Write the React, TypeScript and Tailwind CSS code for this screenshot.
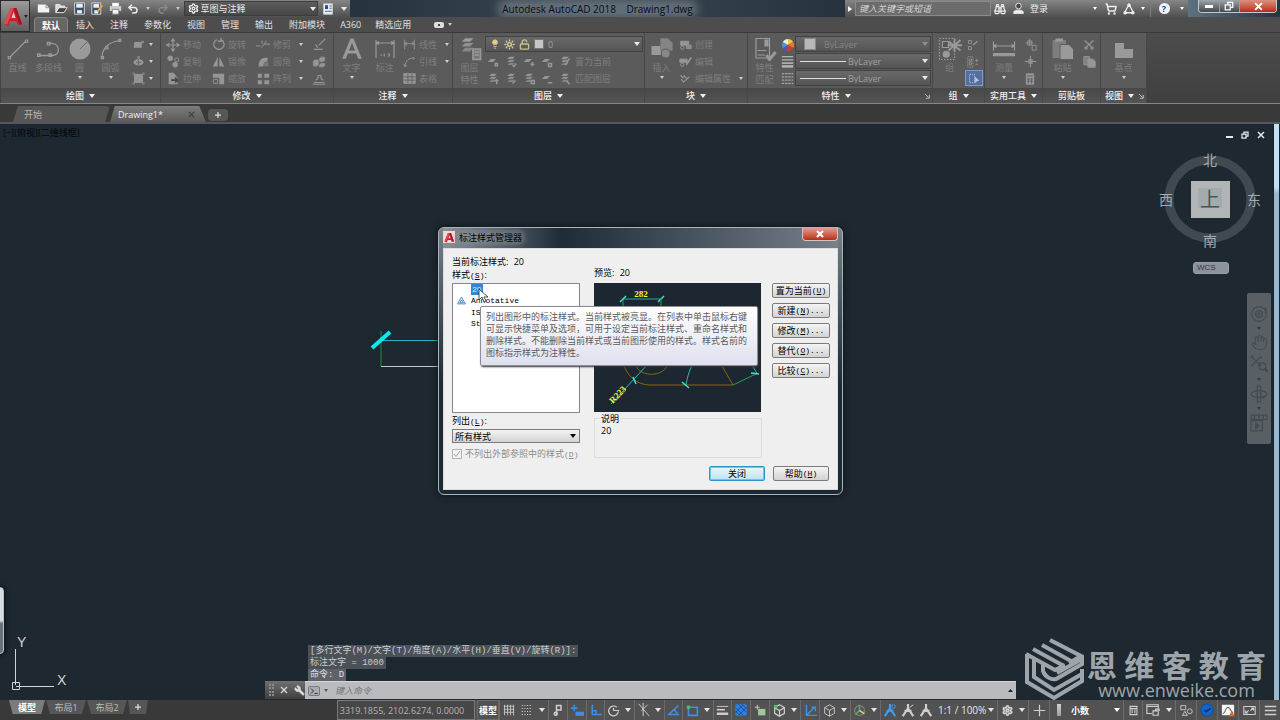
import type { ReactNode } from 'react';
import { Settings, ShoppingCart, Wrench, Hand, Undo2, Redo2, Binoculars, Sun, Lightbulb, LockOpen } from 'lucide-react';

type Kids = { children?: ReactNode };

function Ico({ size = 16, sw = 1.1, className = '', children }: Kids & { size?: number; sw?: number; className?: string }) {
  return (
    <svg width={size} height={size} viewBox="0 0 16 16" fill="none" stroke="currentColor" strokeWidth={sw} className={`shrink-0 ${className}`} aria-hidden="true">
      {children}
    </svg>
  );
}

function Down({ className = '' }: { className?: string }) {
  return (
    <svg width="6" height="4" viewBox="0 0 6 4" className={`shrink-0 ${className}`} aria-hidden="true">
      <path d="M0 0h6L3 4z" fill="currentColor" />
    </svg>
  );
}

function Tiny({ className = 'text-[#c9c9c9]' }: { className?: string }) {
  return (
    <svg width="4" height="3" viewBox="0 0 4 3" className={`shrink-0 ${className}`} aria-hidden="true">
      <path d="M0 0h4L2 3z" fill="currentColor" />
    </svg>
  );
}

/* ---------- shared glyphs ---------- */

const layers = (
  <g fill="currentColor" stroke="none">
    <path d="M6 1h7l-3 3H3z" />
    <path d="M6 5h7l-3 3H3z" opacity=".85" />
    <path d="M6 9h7l-3 3H3z" opacity=".7" />
  </g>
);

function LogoA({ size }: { size: number }) {
  return (
    <svg width={size} height={size} viewBox="0 0 22 22" className="shrink-0" aria-hidden="true">
      <path d="M1 19 8 2h6l6 17-4.500 1-1.500-4H7.500L5.500 21z" fill="#c8202c" />
      <path d="M8 2h3L7 13l-2.500 6L1 19z" fill="#e84848" />
      <path d="m11 6 2.200 6.500H8.800z" fill="#d9cccc" />
      <path d="M14 2l6 17-2.500.600L11.500 2z" fill="#8e1019" opacity=".7" />
    </svg>
  );
}

/* ---------- title bar ---------- */

function QuickButton({ label, children, wide }: Kids & { label: string; wide?: boolean }) {
  return (
    <button aria-label={label} className={`flex h-full items-center justify-center ${wide ? 'w-3' : 'w-[18px]'}`}>
      {children}
    </button>
  );
}

function TitleBar() {
  return (
    <div className="flex h-[17px] items-stretch bg-[#202b36] text-[#ececec]">
      <div className="flex w-[320px] shrink-0 items-stretch bg-linear-to-b from-[#858585] to-[#505050] pl-[5px]">
        <QuickButton label="新建">
          <Ico size={13}><path d="M1 3h10l4 4v6H1z" fill="#f2f2f2" stroke="none" /><path d="M11 3v4h4" stroke="#888" /></Ico>
        </QuickButton>
        <QuickButton label="打开">
          <Ico size={13}><path d="M1 13V3h5l1 2h5v2" fill="#d9d9d9" /><path d="M1 13l4-6h10l-4 6z" fill="#444" stroke="#eee" /></Ico>
        </QuickButton>
        <QuickButton label="保存">
          <Ico size={13}><path d="M2 1h12v14H2z" fill="#35506b" stroke="#ddd" /><path d="M4 2h8v5H4z" fill="#eee" stroke="none" /><path d="M5 10h6v4H5z" fill="#eee" stroke="none" /></Ico>
        </QuickButton>
        <QuickButton label="另存为">
          <Ico size={13}><path d="M1 1h11v14H1z" fill="#35506b" stroke="#ddd" /><path d="M3 2h7v5H3zM4 10h5v4H4z" fill="#eee" stroke="none" /><path d="M8 12l6-8" stroke="#e5a93c" strokeWidth="2.500" /></Ico>
        </QuickButton>
        <QuickButton label="打印">
          <Ico size={13}><path d="M4 1h8v4H4z" fill="#fff" stroke="none" /><path d="M1 5h14v6H1z" fill="#cfcfcf" stroke="none" /><path d="M4 9h8v6H4z" fill="#f4f4f4" stroke="#777" /></Ico>
        </QuickButton>
        <QuickButton label="放弃"><Undo2 size={12} strokeWidth={3} /></QuickButton>
        <QuickButton label="放弃列表" wide><Tiny /></QuickButton>
        <QuickButton label="重做"><Redo2 size={12} strokeWidth={2.5} className="text-[#8b8b8b]" /></QuickButton>
        <QuickButton label="重做列表" wide><Tiny /></QuickButton>
        <div className="relative my-px flex w-[136px] items-center border border-[#3c3c3c] bg-linear-to-b from-[#5b5b5b] to-[#474747]">
          <Settings size={11} strokeWidth={3} className="pointer-events-none absolute left-[3px]" />
          <select aria-label="工作空间" className="h-full w-full appearance-none bg-transparent pl-4 text-[9px] leading-none outline-none">
            <option>草图与注释</option>
          </select>
          <Down className="pointer-events-none absolute right-px" />
        </div>
        <button aria-label="界面" className="flex w-5 items-center justify-center">
          <Ico size={12}><path d="M2 1h12v14H2z" fill="#e8eef5" stroke="#ccc" /><path d="M4 3h4v5H4z" fill="#2d4c80" stroke="none" /><path d="M10 4h3M10 7h3M4 11h9" stroke="#2d4c80" /></Ico>
        </button>
        <button aria-label="自定义" className="flex w-3 items-center justify-center"><Down /></button>
      </div>
      <div className="flex min-w-0 flex-1 items-center justify-center overflow-hidden bg-linear-to-r from-[#26333e] via-[#3b4854] to-[#26333e]">
        <span className="whitespace-pre rounded-full bg-[#7c8790]/60 text-[10px] leading-[10px] text-[#0b0d0f] shadow-[0_0_8px_5px_rgba(124,135,144,0.6)]">Autodesk AutoCAD 2018    Drawing1.dwg</span>
      </div>
      <div className="flex shrink-0 items-stretch bg-linear-to-b from-[#858585] to-[#505050]">
        <button aria-label="展开" className="flex w-[10px] items-center justify-center">
          <svg width="4" height="6" viewBox="0 0 4 6" aria-hidden="true"><path d="M0 0v6l4-3z" fill="#fff" /></svg>
        </button>
        <input aria-label="搜索" placeholder="键入关键字或短语" className="my-px w-[136px] border border-[#8a8a8a] bg-[#6c6c6c] px-[3px] text-[9px] leading-none italic text-white outline-none placeholder:text-[#d2d2d2]" />
        <button aria-label="查找" className="flex w-[18px] items-center justify-center"><Binoculars size={12} strokeWidth={2.5} /></button>
        <button className="flex w-[80px] items-center gap-[5px] pl-[3px] text-[9px] leading-none">
          <Ico size={13}><circle cx="8" cy="5" r="3.500" fill="#474747" stroke="#eee" /><path d="M2 14c0-4 3-4 6-4s6 0 6 4z" fill="#eee" /></Ico>
          登录
        </button>
        <button aria-label="登录选项" className="flex w-3 items-center justify-center"><Tiny className="text-white" /></button>
        <button aria-label="应用商店" className="flex w-5 items-center justify-center"><ShoppingCart size={12} strokeWidth={3} /></button>
        <button aria-label="A360" className="flex w-4 items-center justify-center">
          <Ico size={12} sw={1.800}><path d="M8 2 2 13h12z" /><circle cx="8" cy="3" r="1.500" fill="#fff" /><circle cx="3" cy="13" r="1.500" fill="#fff" /><circle cx="13" cy="13" r="1.500" fill="#fff" /></Ico>
        </button>
        <button aria-label="A360 选项" className="flex w-3 items-center justify-center"><Tiny className="text-white" /></button>
        <span className="mx-px w-px bg-[#7c7c7c]" />
        <button aria-label="帮助" className="flex w-6 items-center justify-center">
          <span className="flex size-[11px] items-center justify-center rounded-full bg-[#f0f4fa] text-[9px] leading-none font-bold text-[#1c3f8c]">?</span>
        </button>
        <button aria-label="帮助选项" className="flex w-3 items-center justify-center"><Tiny className="text-white" /></button>
      </div>
      <div className="flex w-[92px] shrink-0 items-start bg-linear-to-r from-[#5d7280] to-[#28343f] pr-[3px] pl-[10px]">
        <div className="flex h-[13px] w-full overflow-hidden rounded-b border border-t-0 border-[#c3c8cc]">
          <button aria-label="最小化" className="flex flex-1 items-center justify-center border-r border-[#989da1] bg-linear-to-b from-[#a0a5a9] to-[#42494f]"><span className="h-[3px] w-2 bg-white" /></button>
          <button aria-label="还原" className="flex flex-1 items-center justify-center border-r border-[#989da1] bg-linear-to-b from-[#a0a5a9] to-[#42494f]"><Ico size={10} sw={2}><path d="M2 6h8v8H2z" stroke="#fff" /><path d="M6 5V2h8v8h-3" stroke="#fff" /></Ico></button>
          <button aria-label="关闭窗口" className="flex w-9 items-center justify-center bg-linear-to-b from-[#dc9080] to-[#b8270d]"><Ico size={9} sw={3.500}><path d="M2 2l12 12M14 2 2 14" stroke="#fff" /></Ico></button>
        </div>
      </div>
    </div>
  );
}

const ribbonTabs = ['默认', '插入', '注释', '参数化', '视图', '管理', '输出', '附加模块', 'A360', '精选应用'];

function RibbonTabs() {
  return (
    <div className="flex h-[15px] items-stretch bg-[#4d4d4d] pl-1 text-[9px] leading-none text-[#e0e0e0]" role="tablist">
      {ribbonTabs.map((t, i) => (
        <button key={t} role="tab" aria-selected={i === 0} className={i === 0 ? 'rounded-t-sm border border-b-0 border-[#868686] bg-[#666] px-[7px] font-bold text-white' : i > 7 ? 'px-[7px]' : 'px-2'}>
          {t}
        </button>
      ))}
      <button aria-label="功能区显示" className="flex items-center gap-1 pl-4">
        <span className="flex h-[6px] w-[10px] items-center justify-center rounded-xs bg-[#dedede]"><span className="size-[2px] bg-[#444]" /></span>
        <Tiny />
      </button>
    </div>
  );
}

/* ---------- ribbon ---------- */

function Big({ label, icon, arrow, w = 'w-[31px]' }: { label: string[]; icon: ReactNode; arrow?: boolean; w?: string }) {
  return (
    <button className={`flex shrink-0 flex-col items-center text-[9px] text-[#7e7e7e] ${w}`}>
      <span className="flex h-[26px] items-center text-[#9a9a9a]">{icon}</span>
      {label.map((l) => <span key={l} className="leading-[12px] whitespace-nowrap">{l}</span>)}
      {arrow && <Tiny className="mt-[2px] text-[#d0d0d0]" />}
    </button>
  );
}

function Small({ label, icon, arrow }: { label?: string; icon: ReactNode; arrow?: boolean }) {
  return (
    <button className="flex h-[17px] items-center gap-[2px] text-[9px] leading-none whitespace-nowrap text-[#7e7e7e]">
      <span className="flex w-4 justify-center text-[#969696]">{icon}</span>
      {label}
      {arrow && <Tiny className={label ? 'ml-[6px] text-[#d0d0d0]' : 'ml-px text-[#d0d0d0]'} />}
    </button>
  );
}

function Panel({ title, w, children, arrow = true, corner }: Kids & { title: string; w: string; arrow?: boolean; corner?: boolean }) {
  return (
    <section className={`flex shrink-0 flex-col border-r border-[#474747] bg-[#5b5b5b] ${w}`}>
      <div className="flex flex-1 items-start px-px pt-[3px]">{children}</div>
      <button className={`relative flex h-[15px] w-full items-center justify-center gap-[5px] bg-linear-to-b from-[#484848] to-[#545454] text-[9px] leading-none font-medium text-[#f0f0f0] ${corner ? 'pr-2' : ''}`}>
        {title}
        {arrow && <Down />}
        {corner && <Ico size={6} sw={2} className="absolute right-[2px]"><path d="M3 3l9 9M14 5v9H5" stroke="#ddd" /></Ico>}
      </button>
    </section>
  );
}

function Combo({ label, value, lead, pad, dim }: { label: string; value: string; lead: ReactNode; pad: string; dim?: boolean }) {
  return (
    <div className="relative flex h-4 w-full items-center border border-[#424242] bg-linear-to-b from-[#696969] to-[#555]">
      <span className="pointer-events-none absolute inset-y-0 left-1 flex items-center gap-1">{lead}</span>
      <select aria-label={label} className={`h-full w-full appearance-none bg-transparent text-[9px] leading-none outline-none ${pad} ${dim ? 'text-[#858585]' : 'text-[#a0a0a0]'}`}>
        <option>{value}</option>
      </select>
      <Down className={`pointer-events-none absolute right-[2px] ${dim ? 'text-[#8f8f8f]' : 'text-[#e8e8e8]'}`} />
    </div>
  );
}

const g = {
  line: <Ico size={24} sw={0.8}><path d="M3 13 13 3" /><path d="M1.500 13h1.500v1.500H1.500zM13 2h1.500v1.500H13z" /></Ico>,
  pline: <Ico size={26} sw={0.8}><path d="M2 12h8c5 0 5-7 0-7.500H8" /><path d="M1 11h1.500v1.500H1zM7 4h1.500v1.500H7zM8 11h1.500v1.500H8z" /></Ico>,
  circle: <Ico size={24}><circle cx="8" cy="8" r="7" fill="currentColor" stroke="none" /><path d="m8 8 5-5" stroke="#6a6a6a" strokeWidth=".6" /></Ico>,
  arc: <Ico size={24} sw={0.8}><path d="M2 14C2 8 6 3 14 2.500" /><path d="M1.500 13h1.500v1.500H1.500zM4.500 6.500H6V8H4.500zM13 1.500h1.500V3H13z" /></Ico>,
  text: <Ico size={24}><path d="M1.500 14.500 7 1h2l5.500 13.500h-2.300L10.800 11H5.200l-1.400 3.500zM6 9h4L8 4z" fill="currentColor" stroke="none" /></Ico>,
  dim: <Ico size={24} sw={0.8}><path d="M2 2v12M14 2v12M2 4h12M2 4l2-1M2 4l2 1M14 4l-2-1M14 4l-2 1" /><path d="M5 12h1M7.500 11v2M10 11l1 1-1 1" /></Ico>,
  layerProps: <Ico size={24}><g transform="scale(.8)">{layers}</g><path d="M10 8h5v7h-5z" fill="#777" /><path d="M11 10h3M11 12h3" /></Ico>,
  insert: <Ico size={24}><path d="M1 6h9v6H1z" fill="currentColor" stroke="none" /><path d="M7 1h5l3 3v5H7z" fill="#858585" stroke="#777" strokeWidth=".5" /><circle cx="10.500" cy="11" r="3" fill="#888" stroke="#5b5b5b" strokeWidth=".7" /></Ico>,
  match: <Ico size={24} sw={0.8}><path d="M2 1h9v13H2z" /><path d="M8 2h2v4H8z" fill="currentColor" /><path d="M3 9h6M3 12h5" /><path d="m9 12 2 3 4-5" strokeWidth="2" /></Ico>,
  group: <Ico size={24} sw={0.8}><path d="M1 1h10v14H1z" strokeDasharray="1 1" /><path d="M3 3h4v4H3z" fill="#555" /><circle cx="5.500" cy="11.500" r="2" fill="currentColor" /><path d="M11 1v9M7 3l8 6M15 2 7 9M6.500 5.500H16" strokeWidth="1.200" /></Ico>,
  measure: <Ico size={24} sw={0.8}><path d="M1 3v6M15 3v6M1 6h14M1 6l2-1M1 6l2 1M15 6l-2-1M15 6l-2 1" /><path d="M1 11h14v1.500H1z" fill="currentColor" /></Ico>,
  paste: <Ico size={24}><path d="M1 2h9v12H1z" fill="#7d7d7d" stroke="none" /><path d="M3 1h5v2H3z" fill="currentColor" stroke="none" /><path d="M6 5h6l3 3v7H6z" fill="currentColor" stroke="#5b5b5b" strokeWidth=".6" /></Ico>,
  base: <Ico size={24}><path d="M2 4h6v4h6v6H2z" fill="currentColor" stroke="none" /></Ico>,
  rect: <Ico size={13}><path d="M3 5h9v7H2z" fill="currentColor" stroke="none" /><path d="M12 4h2v2h-2z" /></Ico>,
  ellipse: <Ico size={13}><ellipse cx="8" cy="9" rx="6" ry="4" fill="currentColor" stroke="none" /><path d="M8 3v9M5 9h6" stroke="#666" /><path d="M7 2h2v2H7z" /></Ico>,
  hatch: <Ico size={13}><path d="M3 3h10v10H3z" fill="currentColor" /><path d="M1 1h2v2H1zM13 1h2v2h-2zM1 13h2v2H1zM13 13h2v2h-2zM5 11l6-6" stroke="#888" /></Ico>,
  move: <Ico size={14} sw={1.400}><path d="M8 2v12M2 8h12M6 4l2-3 2 3M6 12l2 3 2-3M4 6 1 8l3 2M12 6l3 2-3 2" /></Ico>,
  rotate: <Ico size={13} sw={1.600}><path d="M6 2a6.300 6.300 0 1 0 5 0M11 0v4H7" /></Ico>,
  trim: <Ico size={14}><path d="M0 9h5M10 6l-4 5M12 3l-2 3M9 7h7M7 3v4" /></Ico>,
  erase: <Ico size={13} sw={1.500}><path d="M15 1 7 9M3 8l3 4M1 14h11" /></Ico>,
  copy: <Ico size={13}><circle cx="4" cy="4" r="3" fill="currentColor" /><circle cx="12" cy="6" r="2.500" /><circle cx="10" cy="12" r="3" fill="currentColor" /></Ico>,
  mirror: <Ico size={13}><path d="M7 2v12H1zM9 2v12h6z" fill="currentColor" stroke="none" /></Ico>,
  fillet: <Ico size={13}><path d="M2 14C2 7 5 3 13 3v5c-4 0-5 2-5 6z" fill="currentColor" stroke="none" /><path d="M9 9h5v5H9z" fill="#7a7a7a" stroke="none" /></Ico>,
  explode: <Ico size={14}><path d="M1 7l2-2h5v6l-2 2H1zM8 4l2-2h5v4l-2 2H8zM8 11l2-2h5v3l-2 2H8z" fill="currentColor" stroke="#666" strokeWidth=".6" /></Ico>,
  stretch: <Ico size={13}><path d="M2 1h6l5 6v8H2z" fill="currentColor" stroke="none" /><path d="M5 10h8M10 7l3 3-3 3" stroke="#454545" strokeWidth="2" /></Ico>,
  scale: <Ico size={13}><path d="M1 2h14v13H9V7H1z" fill="currentColor" stroke="none" /><path d="M2 9h5v5H2z" /></Ico>,
  array: <Ico size={13}><path d="M1 2h5v5H1zM9 2h6v5H9zM1 10h5v5H1zM9 10h6v5H9z" fill="currentColor" stroke="none" /></Ico>,
  offset: <Ico size={14} sw={1.300}><path d="M2 12h12M4 9c2 0 3-2 3-5h3c0 3 1 5 3 5M1 14h14" /></Ico>,
  linear: <Ico size={13}><path d="M2 2v12M14 2v12M2 7h12M5 5 2 7l3 2M11 5l3 2-3 2" /></Ico>,
  leader: <Ico size={13}><path d="M2 14C4 6 7 4 12 4M1 11l1 3 3-1" /><circle cx="13" cy="4" r="1" /></Ico>,
  table: <Ico size={13}><path d="M1 2h14v12H1z" fill="currentColor" /><path d="M1 6h14M1 10h14M6 2v12M11 2v12" stroke="#606060" /></Ico>,
  block: <Ico size={13}><path d="M2 4h10v5H2z" fill="currentColor" /><circle cx="4" cy="12" r="2" /><path d="M9 9h6v4H9z" fill="#888" /></Ico>,
  blockEdit: <Ico size={13}><path d="M1 5h9v4H1z" fill="currentColor" /><circle cx="4" cy="12" r="2" /><path d="m9 12 6-9" strokeWidth="2" /></Ico>,
  attr: <Ico size={12} sw={1.500}><path d="m2 3 4 4M6 3l4 4M3 8l3 4 8-7" /></Ico>,
  lay: (extra: string) => <Ico size={12}>{layers}<path d={extra} strokeWidth="2" /></Ico>,
  flat: (extra: string) => <Ico size={12}><path d="M5 4h7l-4 4H1z" fill="currentColor" stroke="none" /><path d={extra} strokeWidth="2" /></Ico>,
};

function Ribbon() {
  return (
    <div className="flex h-[72px] items-stretch border-t border-b border-[#3a3a3a] border-b-[#868686] bg-linear-to-b from-[#4c4c4c] to-[#404040] pl-px">
      <Panel title="绘图" w="w-[160px]">
        <Big label={['直线']} icon={g.line} />
        <Big label={['多段线']} icon={g.pline} />
        <Big label={['圆']} icon={g.circle} arrow />
        <Big label={['圆弧']} icon={g.arc} arrow />
        <div className="pl-1">
          <Small icon={g.rect} arrow />
          <Small icon={g.ellipse} arrow />
          <Small icon={g.hatch} arrow />
        </div>
      </Panel>
      <Panel title="修改" w="w-[173px]">
        <div className="grid grid-cols-[45px_45px_56px_17px] pl-[3px]">
          <Small label="移动" icon={g.move} /><Small label="旋转" icon={g.rotate} /><Small label="修剪" icon={g.trim} arrow /><Small icon={g.erase} />
          <Small label="复制" icon={g.copy} /><Small label="镜像" icon={g.mirror} /><Small label="圆角" icon={g.fillet} arrow /><Small icon={g.explode} />
          <Small label="拉伸" icon={g.stretch} /><Small label="缩放" icon={g.scale} /><Small label="阵列" icon={g.array} arrow /><Small icon={g.offset} />
        </div>
      </Panel>
      <Panel title="注释" w="w-[119px]">
        <Big label={['文字']} icon={g.text} arrow w="w-[33px]" />
        <Big label={['标注']} icon={g.dim} w="w-[33px]" />
        <div>
          <Small label="线性" icon={g.linear} arrow />
          <Small label="引线" icon={g.leader} arrow />
          <Small label="表格" icon={g.table} />
        </div>
      </Panel>
      <Panel title="图层" w="w-[192px]">
        <Big label={['图层', '特性']} icon={g.layerProps} />
        <div className="flex-1">
          <Combo
            label="图层"
            value="0"
            pad="pl-[62px]"
            lead={
              <>
                <Lightbulb size={10} className="fill-[#e3d08c] text-[#d8c68a]" />
                <Sun size={11} strokeWidth={3} className="text-[#d9cd97]" />
                <LockOpen size={11} strokeWidth={3} className="text-[#cdbd86]" />
                <span className="size-[10px] border border-[#777] bg-[#c6c6c6]" />
              </>
            }
          />
          <div className="grid grid-cols-[18px_18px_18px_18px_1fr] pt-px">
            <Small icon={g.flat('M11 10h3v3h-3z')} /><Small icon={g.lay('m10 12 2 2 3-4')} /><Small icon={g.flat('M10 11h5M12.500 8v6')} /><Small icon={g.flat('M10 10h4v4h-4z')} /><Small label="置为当前" icon={g.lay('m9 12 5-9')} />
            <Small icon={g.lay('M13 9v6M11 11l2-2 2 2')} /><Small icon={g.lay('m10 14 4-4')} /><Small icon={g.lay('M11 10h4v4h-4z')} /><Small icon={g.flat('M9 13h6')} /><Small label="匹配图层" icon={g.lay('m10 10 4 5')} />
          </div>
        </div>
      </Panel>
      <Panel title="块" w="w-[103px]">
        <Big label={['插入']} icon={g.insert} arrow />
        <div>
          <Small label="创建" icon={g.block} />
          <Small label="编辑" icon={g.blockEdit} />
          <Small label="编辑属性" icon={g.attr} arrow />
        </div>
      </Panel>
      <Panel title="特性" w="w-[185px]" corner>
        <Big label={['特性', '匹配']} icon={g.match} />
        <div className="flex w-[15px] flex-col items-center">
          <span className="flex h-[17px] items-center">
            <svg width="12" height="12" viewBox="0 0 12 12" aria-hidden="true">
              <path d="M6 6V0a6 6 0 0 1 5.200 3z" fill="#f0c63c" /><path d="M6 6l5.200-3a6 6 0 0 1 0 6z" fill="#df7a2e" /><path d="M6 6l5.200 3A6 6 0 0 1 6 12z" fill="#d23b34" />
              <path d="M6 6v6A6 6 0 0 1 .8 9z" fill="#5a54c0" /><path d="M6 6 .8 9a6 6 0 0 1 0-6z" fill="#3f9bd8" /><path d="M6 6 .8 3A6 6 0 0 1 6 0z" fill="#e8f0e0" />
            </svg>
          </span>
          <Ico size={13} className="my-[2px] text-[#b4b4b4]"><path d="M1 2h14M1 6h14" strokeWidth="1.500" /><path d="M1 10h14" strokeWidth="2" /><path d="M1 14h14" strokeWidth="3" /></Ico>
          <Ico size={13} className="my-[2px] text-[#a4a4a4]"><path d="M1 2h14M1 6h14M1 10h14M1 14h14" strokeDasharray="3 1" strokeWidth="1.500" /></Ico>
        </div>
        <div className="flex min-w-0 flex-1 flex-col gap-px">
          <Combo label="颜色" value="ByLayer" pad="pl-[28px]" dim lead={<span className="ml-1 size-3 border border-[#888] bg-[#b8b8b8]" />} />
          <Combo label="线宽" value="ByLayer" pad="pl-[52px]" lead={<span className="h-px w-[46px] bg-[#e0e0e0]" />} />
          <Combo label="线型" value="ByLayer" pad="pl-[52px]" lead={<span className="h-px w-[46px] bg-[#e0e0e0]" />} />
        </div>
      </Panel>
      <Panel title="组" w="w-[52px]">
        <Big label={['组']} icon={g.group} />
        <div>
          <Small icon={<Ico size={12}><path d="M2 2h4v4H2zM2 10h4v4H2z" /><path d="m8 8 6-5" strokeWidth="2" /></Ico>} />
          <Small icon={<Ico size={12}><path d="M1 1h7v14H1z" strokeDasharray="2 1" /><path d="M3 4h3v3H3zM3 9h3v3H3zM11 6h4M13 4v4M11 11h4" /></Ico>} />
          <button aria-label="组选择" className="flex h-4 w-[18px] items-center justify-center border border-[#7f9ac6] bg-[#53709f] text-[#b9c8e0]">
            <Ico size={11}><path d="M1 2h7v12H1z" strokeDasharray="2 1" /><path d="m9 6 5 5-3 .5L9 14z" fill="currentColor" /></Ico>
          </button>
        </div>
      </Panel>
      <Panel title="实用工具" w="w-[58px]">
        <Big label={['测量']} icon={g.measure} arrow w="w-[36px]" />
        <div>
          <Small icon={<Ico size={13}><path d="M7 1v9M2 6h9M4.500 3.500h5v5h-5zM10 9h5v6h-5z" /></Ico>} />
          <Small icon={<Ico size={13} sw={1.300}><path d="M8 1v14M1 8h14M6 6h4v4H6z" /></Ico>} />
          <Small icon={<Ico size={12}><path d="M3 1h10v14H3z" fill="currentColor" /><path d="M4 4h8M4 8h8M4 11h8M6 7v7M10 7v7" stroke="#5d5d5d" /></Ico>} />
        </div>
      </Panel>
      <Panel title="剪贴板" w="w-[58px]" arrow={false}>
        <Big label={['粘贴']} icon={g.paste} arrow w="w-[37px]" />
        <div>
          <Small icon={<Ico size={12} sw={1.600}><path d="m2 2 9 8M14 2 5 10" /><circle cx="4" cy="12" r="1.500" /><circle cx="12" cy="12" r="1.500" /></Ico>} />
          <Small icon={<Ico size={13}><path d="M1 2h7v10H1z" fill="#808080" /><path d="M6 5h6l3 3v7H6z" fill="currentColor" /></Ico>} />
        </div>
      </Panel>
      <Panel title="视图" w="w-[46px]" corner>
        <Big label={['基点']} icon={g.base} arrow w="w-full" />
      </Panel>
    </div>
  );
}

/* ---------- file tabs ---------- */

function FileTabs() {
  return (
    <div className="flex h-5 items-end border-b-2 border-[#56565e] bg-[#393939] pl-[13px] text-[9px] leading-none">
      <button className="flex h-4 w-[97px] items-center rounded-t-sm bg-[#565656] pl-[11px] text-[#b7b7b7] [clip-path:polygon(5%_0,100%_0,95%_100%,0_100%)]">开始</button>
      <div className="flex h-4 w-[96px] items-center justify-between rounded-t-sm bg-linear-to-b from-[#7c7c7c] to-[#5b5b5b] pr-[11px] pl-2 text-[#f1f1f1] [clip-path:polygon(5%_0,93%_0,100%_100%,0_100%)]">
        <button className="font-medium">Drawing1*</button>
        <button aria-label="关闭图形"><Ico size={7} sw={3}><path d="m2 2 12 12M14 2 2 14" stroke="#3f3f3f" /></Ico></button>
      </div>
      <button aria-label="新图形" className="mb-px ml-[2px] flex h-3 w-5 items-center justify-center rounded-sm bg-[#575757]"><Ico size={8} sw={2.500}><path d="M8 2v12M2 8h12" stroke="#ddd" /></Ico></button>
    </div>
  );
}

/* ---------- dialog ---------- */

function DlgButton({ children, w, primary }: Kids & { w: string; primary?: boolean }) {
  return (
    <button className={`flex h-[15px] items-center justify-center rounded-[2px] border text-[9px] leading-none whitespace-pre text-black ${w} ${primary ? 'border-[#2f95c4] bg-linear-to-b from-[#eaf6fb] to-[#bfe3f3] ring-1 ring-[#6fc7e8] ring-inset' : 'border-[#7b7b7b] bg-linear-to-b from-[#f4f4f4] to-[#d3d3d3]'}`}>
      {children}
    </button>
  );
}

function Key({ k, more = '' }: { k: string; more?: string }) {
  return <span className="font-['Liberation_Mono',monospace] text-[8px]">(<u>{k}</u>){more}</span>;
}

function Preview() {
  return (
    <svg width="167" height="129" viewBox="0 0 167 129" fill="none" className="block bg-[#1d2731]" role="img" aria-label="预览">
      <path d="M29 16h38" stroke="#28a9a8" />
      <path d="M26 19l6-6M64 19l6-6" stroke="#3fe0c0" strokeWidth="1.500" />
      <path d="M29 17v14M67 15v14" stroke="#2b9e35" />
      <text x="47" y="14" textAnchor="middle" fill="#f4f436" fontSize="9" fontWeight="bold" fontFamily="Liberation Serif">282</text>
      <path d="M29 80c4 13 14 22 27 22h83L128 83" stroke="#8b6413" />
      <path d="M42 83c5 11 26 11 31 0" stroke="#8b6413" />
      <path d="M139 102l25-12" stroke="#1fa63c" />
      <path d="M53 82 17 121M98 82c-3 7-5 13-6 20M158 82c2 4 4 6 5 9" stroke="#27b9b9" />
      <path d="M39 94l3 7M88 99l7 6M157 90l8 1" stroke="#3fe0d8" strokeWidth="1.500" />
      <text transform="translate(19 121) rotate(-47)" fill="#f4f436" fontSize="9" fontWeight="bold" fontFamily="Liberation Serif">R223</text>
    </svg>
  );
}

function Dialog() {
  return (
    <div role="dialog" aria-label="标注样式管理器" className="absolute top-[103px] left-[438px] w-[405px] rounded-md border border-[#a9b4bb] bg-linear-to-b from-[#77828a] to-[#1d2933] to-60% p-1 pt-0 shadow-[0_0_6px_#0b1116]">
      <header className="flex h-5 items-start justify-between bg-linear-to-r from-[#8a9298] via-[#1f2c38] via-30% to-[#77818a]">
        <h1 className="flex h-[18px] items-center gap-1 text-[9px] leading-none text-black">
          <span className="flex size-3 items-center justify-center bg-[#ecd9d9]"><LogoA size={11} /></span>
          <span className="rounded bg-[#8b949b]/50 shadow-[0_0_4px_3px_rgba(139,148,155,0.5)]">标注样式管理器</span>
        </h1>
        <button aria-label="关闭对话框" className="flex h-[13px] w-9 items-center justify-center rounded-b border border-t-0 border-[#d9c3bf] bg-linear-to-b from-[#e09c8c] to-[#b52c14]"><Ico size={8} sw={4}><path d="m2 2 12 12M14 2 2 14" stroke="#fff" /></Ico></button>
      </header>
      <div className="border border-[#d9dde0] bg-[#efefef] px-2 pt-[6px] pb-2 text-[9px] leading-[13px] text-black">
        <p>当前标注样式: <span className="ml-[3px]">20</span></p>
        <div className="flex items-start">
          <div className="w-[128px] shrink-0">
            <label htmlFor="styles" className="block h-[15px]">样式<Key k="S" />:</label>
            <ul id="styles" className="h-[130px] border border-[#83878d] bg-white pl-1 font-['Liberation_Mono','Noto_Sans_CJK_SC',monospace] text-[8px] leading-[11px]">
              <li className="pl-[14px]"><span className="inline-block bg-[#3485d6] px-px text-[#dceaf8]">20</span></li>
              <li className="flex items-center gap-[5px]"><Ico size={9} sw={1.500} className="text-[#2e78b8]"><path d="M8 2 1 14h14zM8 7l-3 5h6z" /></Ico>Annotative</li>
              <li className="pt-px pl-[14px]">ISO-25</li>
              <li className="pl-[14px]">Standard</li>
            </ul>
            <label htmlFor="list" className="block h-4 leading-4">列出<Key k="L" />:</label>
            <div className="relative flex h-[14px] items-center border border-[#7b7b7b] bg-linear-to-b from-[#f4f4f4] to-[#d3d3d3]">
              <select id="list" className="h-full w-full appearance-none bg-transparent pl-[2px] leading-none outline-none"><option>所有样式</option></select>
              <Down className="pointer-events-none absolute right-[3px]" />
            </div>
            <label className="mt-1 flex items-center gap-[3px] whitespace-nowrap text-[#8c8c8c]">
              <span className="relative flex size-[10px]">
                <input type="checkbox" defaultChecked disabled className="size-[10px] appearance-none border border-[#b4b4b4] bg-[#f2f2f2]" />
                <Ico size={8} sw={2} className="pointer-events-none absolute top-px left-px"><path d="m2 8 4 5 8-11" stroke="#a0a0a0" /></Ico>
              </span>
              <span>不列出外部参照中的样式<Key k="D" /></span>
            </label>
          </div>
          <div className="ml-[14px] w-[168px] shrink-0">
            <p className="-mt-[2px] h-[17px]">预览: <span className="ml-[3px]">20</span></p>
            <Preview />
            <fieldset className="h-[46px] border border-[#dcdcdc] px-[5px] pb-1 leading-[13px]">
              <legend className="px-px">说明</legend>
              <p className="-mt-px pl-px">20</p>
            </fieldset>
          </div>
          <div className="mt-[15px] ml-[10px] flex flex-col gap-[5px]">
            <DlgButton w="w-[58px]">置为当前<Key k="U" /></DlgButton>
            <DlgButton w="w-[58px]">新建<Key k="N" more="..." /></DlgButton>
            <DlgButton w="w-[58px]">修改<Key k="M" more="..." /></DlgButton>
            <DlgButton w="w-[58px]">替代<Key k="O" more="..." /></DlgButton>
            <DlgButton w="w-[58px]">比较<Key k="C" more="..." /></DlgButton>
          </div>
        </div>
        <div className="mt-[5px] flex justify-end gap-2">
          <DlgButton w="w-14" primary>关闭</DlgButton>
          <DlgButton w="w-14">帮助<Key k="H" /></DlgButton>
        </div>
      </div>
      <div role="tooltip" className="absolute top-[78px] left-[41px] w-[278px] rounded-xs border border-[#8c8c94] bg-linear-to-b from-white to-[#dfe0ee] px-[5px] pt-1 pb-[6px] text-[9px] leading-3 text-[#5a5a5a] shadow-[1px_1px_2px_#333]">
        列出图形中的标注样式。当前样式被亮显。在列表中单击鼠标右键<br />可显示快捷菜单及选项，可用于设定当前标注样式、重命名样式和<br />删除样式。不能删除当前样式或当前图形使用的样式。样式名前的<br />图标指示样式为注释性。
      </div>
      <svg width="10" height="15" viewBox="0 0 10 15" className="absolute top-[60px] left-[39px]" aria-hidden="true"><path d="M1 1v11l3-3 2 5 2-1-2-4h4z" fill="#fff" stroke="#222" strokeWidth=".8" /></svg>
    </div>
  );
}

/* ---------- drawing area ---------- */

function Compass() {
  return (
    <div className="absolute top-6 right-[12px] grid h-[101px] w-[102px] place-items-center font-['Noto_Sans_CJK_SC',sans-serif] text-[14px] leading-none text-[#a4abb0]">
      <svg width="102" height="101" viewBox="0 0 102 101" className="col-start-1 row-start-1" aria-hidden="true">
        <ellipse cx="51" cy="51" rx="41" ry="39" fill="none" stroke="#3e4950" strokeWidth="9" />
        <path d="M32 33h39v37H32z" fill="#b1b5b6" />
        <path d="M39 40h24v20H39z" fill="#a2abae" />
      </svg>
      <span className="col-start-1 row-start-1 self-start pt-1">北</span>
      <span className="col-start-1 row-start-1 self-end pb-[2px]">南</span>
      <span className="col-start-1 row-start-1 justify-self-start">西</span>
      <span className="col-start-1 row-start-1 justify-self-end">东</span>
      <span className="col-start-1 row-start-1 text-[20px] text-[#4a5459]">上</span>
    </div>
  );
}

function NavBar() {
  return (
    <div className="absolute top-[169px] right-[2px] flex h-[151px] w-6 flex-col items-center justify-around rounded-xs bg-[#596065] py-[10px] text-[#434b52]">
      <Ico size={18}><circle cx="8" cy="8" r="6.500" /><circle cx="8" cy="8" r="3" /><path d="M6 8h4M8 6v4M14 2v6" /></Ico>
      <Tiny className="text-[#33393f]" />
      <Hand size={17} strokeWidth={1.5} />
      <Ico size={18}><path d="m1 1 9 9M10 1 1 10M1 1h2M1 1v2M10 1v2" /><circle cx="11" cy="10" r="3" /><path d="m13 12 3 3" strokeWidth="2" /></Ico>
      <Tiny className="text-[#33393f]" />
      <Ico size={18}><path d="M6.500 1h3v14h-3z" /><ellipse cx="8" cy="8" rx="7" ry="3" /><path d="M11 12l2-1" /></Ico>
      <Tiny className="text-[#33393f]" />
      <Ico size={18}><path d="M1 1h14v4H1zM1 6h10v9H1zM4 1v4M8 1v4M12 1v4" /><path d="m5 8 3 2.500L5 13z" fill="currentColor" /></Ico>
    </div>
  );
}

function Watermark() {
  return (
    <div className="absolute right-[7px] bottom-0 flex h-[61px] items-end gap-[3px] text-[#9ea5aa]">
      <svg width="60" height="62" viewBox="0 0 60 62" fill="none" stroke="currentColor" strokeWidth="4" strokeLinejoin="miter" aria-hidden="true">
        <path d="M26 2 57 18 45 25M18 7l29 16M9 11l31 17M2 16l29 16 10-5" />
        <path d="M3 16v28l27 16 28-17v-6" />
        <path d="M10 20v19l20 13 28-16v-5" />
        <path d="M19 25v8c2 6 8 9 13 8l26-15v-5L33 35" />
      </svg>
      <div className="w-[179px]">
        <div className="flex justify-between text-[30px] leading-[28px] font-bold">
          <span>恩</span><span>维</span><span>客</span><span>教</span><span>育</span>
        </div>
        <div className="text-center text-[18px] leading-[20px]">www.enweike.com</div>
      </div>
    </div>
  );
}

function CommandArea() {
  return (
    <div className="absolute right-[257px] bottom-px left-[265px]">
      <div className="flex flex-col items-start pl-[43px] font-['Liberation_Mono','Noto_Sans_CJK_SC',monospace] text-[9px] leading-3 text-[#c8cccf]">
        <span className="bg-[#4b5157] px-[2px]">[多行文字(M)/文字(T)/角度(A)/水平(H)/垂直(V)/旋转(R)]:</span>
        <span className="bg-[#4b5157] px-[2px]">标注文字 = 1000</span>
        <span className="bg-[#5d6368] px-[2px] text-[#e2e4e6]">命令: D</span>
      </div>
      <div className="flex h-[18px] items-stretch">
        <div className="flex w-10 items-center gap-[6px] bg-linear-to-b from-[#707070] to-[#3f3f3f] pl-1 text-[#dcdcdc]">
          <span className="h-3 w-[5px] border-x-2 border-dotted border-[#8a8a8a]" />
          <button aria-label="关闭命令行"><Ico size={8} sw={2.500}><path d="m2 2 12 12M14 2 2 14" /></Ico></button>
          <button aria-label="自定义命令行"><Wrench size={11} className="-scale-x-100 fill-current" /></button>
        </div>
        <div className="flex flex-1 items-center gap-1 border-t border-[#d4d6d8] bg-[#b9bbbe] px-[3px]">
          <span className="flex h-[10px] w-3 items-center justify-center rounded-xs border border-[#767a7e] bg-[#a9adb1] text-[#333]"><Ico size={8} sw={2}><path d="m2 3 5 5-5 5M9 13h6" /></Ico></span>
          <Tiny className="text-[#555]" />
          <input aria-label="命令" placeholder="键入命令" className="ml-[3px] min-w-0 flex-1 bg-transparent text-[9px] leading-none italic outline-none placeholder:text-[#73777a]" />
          <svg width="5" height="3" viewBox="0 0 5 3" aria-hidden="true"><path d="M0 3h5L2.500 0z" fill="#222" /></svg>
        </div>
      </div>
    </div>
  );
}

function Canvas() {
  return (
    <main className="flex min-h-0 flex-1 bg-[#1e2830]">
      <div className="relative min-w-0 flex-1">
        <p className="pt-[3px] pl-[3px] text-[9px] leading-3 text-[#050708]">[−][俯视][二维线框]</p>
        <div className="absolute top-[7px] right-2 flex items-center gap-2 text-[#e8e8e8]">
          <button aria-label="最小化图形" className="mt-1 h-[2px] w-[7px] bg-current" />
          <button aria-label="还原图形"><Ico size={8} sw={2.500}><path d="M2 6h8v8H2zM6 5V2h8v8h-3" /></Ico></button>
          <button aria-label="关闭视口"><Ico size={8} sw={3}><path d="m2 2 12 12M14 2 2 14" /></Ico></button>
        </div>
        <svg width="70" height="50" viewBox="0 0 70 50" fill="none" className="absolute top-[202px] left-[370px]" aria-hidden="true">
          <path d="M11 5v35" stroke="#1f8a34" />
          <path d="M11 14.500h59" stroke="#22b3b8" />
          <path d="M11 40.500h59" stroke="#c2c7ca" />
          <path d="M2 22 20 6" stroke="#10e8ee" strokeWidth="4" />
        </svg>
        <Compass />
        <button className="absolute top-[138px] right-[44px] flex h-3 w-9 items-center rounded-[3px] border border-[#9aa0a8] bg-[#8c929b] px-[3px] font-['Liberation_Sans',sans-serif] text-[8px] leading-none text-[#33393f]">WCS</button>
        <NavBar />
        <div className="absolute top-[463px] -left-1 h-[67px] w-2 rounded border border-[#b9c2c9] bg-linear-to-b from-[#d5dce2] from-50% to-[#64707a] to-55% shadow-[0_0_5px_#000]" />
        <svg width="70" height="62" viewBox="0 0 70 62" fill="none" stroke="#d0d4d6" className="absolute bottom-[5px] left-[8px]" aria-label="坐标轴">
          <path d="M4.500 49.500h7v7h-7zM7.500 16v36M8 53.500h38" />
          <text x="9" y="14" fontSize="14" fill="#d0d4d6" stroke="none" fontFamily="Liberation Sans">Y</text>
          <text x="49" y="52" fontSize="14" fill="#d0d4d6" stroke="none" fontFamily="Liberation Sans">X</text>
        </svg>
        <CommandArea />
        <Watermark />
        <Dialog />
      </div>
      <div className="w-[7px] shrink-0 border-x border-[#14202a] bg-linear-to-b from-[#c4e0f6] from-11% to-[#98b9d3] to-12%" />
    </main>
  );
}

/* ---------- status bar ---------- */

const N = 'w-[18px]';
const M = 'w-[19px]';
const W = 'w-[21px]';

function Cell({ w, label, children, plain }: Kids & { w: string; label: string; plain?: boolean }) {
  return (
    <button aria-label={label} className={`flex h-full shrink-0 items-center justify-center ${plain ? '' : 'border-l border-[#6b6b6b]'} ${w}`}>{children}</button>
  );
}

function Arrow({ label }: { label: string }) {
  return <Cell w="w-3" label={label} plain><Down className="text-[#e4e4e4]" /></Cell>;
}

const hang = '[clip-path:polygon(0_0,100%_0,90%_100%,10%_100%)]';
const person = <path d="M8 1v5L2 15M8 6l6 9M4 9h8" strokeWidth="2.500" />;
const cube = <path d="M8 1l6 3.500v7L8 15l-6-3.500v-7zM2 4.500 8 8l6-3.500M8 8v7" />;

function StatusBar() {
  return (
    <footer className="flex h-5 shrink-0 items-stretch bg-[#393939] text-[#cfcfcf]">
      <nav className="flex flex-1 items-start gap-px pl-[9px] text-[9px] leading-none">
        <button className={`h-[14px] w-9 bg-[#7b7b7b] font-bold text-white ${hang}`}>模型</button>
        <button className={`h-[14px] w-10 bg-[#565656] text-[#bcbcbc] ${hang}`}>布局1</button>
        <button className={`h-[14px] w-10 bg-[#565656] text-[#bcbcbc] ${hang}`}>布局2</button>
        <button aria-label="新建布局" className={`flex h-[14px] w-5 items-center justify-center bg-[#565656] ${hang}`}><Ico size={8} sw={2.500}><path d="M8 2v12M2 8h12" stroke="#ddd" /></Ico></button>
      </nav>
      <div className="flex items-stretch bg-[#525252]">
        <button className="mr-[2px] w-[138px] border border-[#7a7a7a] bg-[#474747] pr-2 text-[9px] leading-none whitespace-nowrap text-[#b4b4b4]">3319.1855, 2102.6274, 0.0000</button>
        <button className="w-[22px] border border-[#6b6b6b] text-[9px] leading-none font-bold whitespace-nowrap text-white">模型</button>
        <Cell w={M} label="栅格"><Ico size={12}><path d="M2 1v14M6 1v14M10 1v14M14 1v14M1 3h14M1 7h14M1 11h14" /></Ico></Cell>
        <Cell w={N} label="捕捉" plain><Ico size={12}><path d="M1 2h14M1 6h14M1 10h14M1 14h14" strokeDasharray="1.500 2" strokeWidth="1.500" /></Ico></Cell>
        <Arrow label="捕捉选项" />
        <Cell w={M} label="推断约束"><Ico size={12} sw={2}><path d="M6 15V2h6v6H7" /><circle cx="5" cy="13" r="2" /></Ico></Cell>
        <Cell w={M} label="动态输入"><Ico size={13} className="text-[#3d8fe6]"><path d="M4 1v8M0 5h8" strokeWidth="2" /><path d="M6 10h10v4H6z" fill="currentColor" /></Ico></Cell>
        <Cell w={N} label="正交"><Ico size={12} sw={2} className="text-[#3d8fe6]"><path d="M3 1v13h13M3 9h5v5" /></Ico></Cell>
        <Cell w={N} label="极轴"><Ico size={13} sw={1.500}><path d="M14 9a6 6 0 1 1-2-5M8 8h7M8 8V5" /></Ico></Cell>
        <Arrow label="极轴选项" />
        <Cell w={N} label="等轴测"><Ico size={14}><path d="M2 1l12 14M7 0v15M12 2 5 9" /></Ico></Cell>
        <Arrow label="等轴测选项" />
        <Cell w={N} label="对象捕捉追踪"><Ico size={13} sw={1.800} className="text-[#3d8fe6]"><path d="M14 2 2 13h13M9 7l4 5" /></Ico></Cell>
        <Cell w={M} label="对象捕捉"><Ico size={13} sw={2} className="text-[#3d8fe6]"><path d="M3 4h11v10H3z" /><path d="M1 2h4v4H1z" fill="#49c06a" stroke="none" /></Ico></Cell>
        <Arrow label="对象捕捉选项" />
        <Cell w={N} label="线宽"><Ico size={13}><path d="M1 3h14" /><path d="M1 7h10" strokeWidth="2" /><path d="M1 12h14" strokeWidth="3" /></Ico></Cell>
        <Cell w={M} label="透明度"><Ico size={12} className="text-[#2f7fe0]"><path d="M1 1h14v14H1z" fill="currentColor" /><path d="m1 5 10 10M1 10l5 5M5 1l10 10M10 1l5 5M11 1 1 11M15 5 5 15" stroke="#1a4a90" /></Ico></Cell>
        <Cell w={M} label="选择循环"><Ico size={13}><path d="M5 6h9v8H5z" fill="#9dc79a" stroke="none" /><path d="M1 4h6M4 1v6" /></Ico></Cell>
        <Cell w={M} label="三维对象捕捉"><Ico size={13} sw={1.500}>{cube}<path d="M1 1h4v4H1z" fill="#49c06a" stroke="none" /></Ico></Cell>
        <Arrow label="三维选项" />
        <Cell w={M} label="动态 UCS"><Ico size={13} sw={1.800} className="text-[#3d8fe6]"><path d="M3 1v13h13M3 14 13 4M9 4h5v5" /></Ico></Cell>
        <Cell w={M} label="选择过滤"><Ico size={13}>{cube}</Ico></Cell>
        <Arrow label="过滤选项" />
        <Cell w={N} label="小控件"><Ico size={13}><circle cx="8" cy="8" r="6" stroke="#c98a4a" /><path d="M8 8V1" stroke="#4b8fe0" strokeWidth="2" /><path d="m8 8-5 5" stroke="#5ab05a" strokeWidth="2" /><path d="m8 8 6 4" stroke="#d0c0a0" strokeWidth="2" /></Ico></Cell>
        <Arrow label="小控件选项" />
        <Cell w={M} label="注释可见性"><Ico size={14} className="text-[#3d9bf0]">{person}<circle cx="12" cy="4" r="2" /></Ico></Cell>
        <Cell w={N} label="自动缩放" plain><Ico size={14}>{person}<path d="m10 5 4-3" /></Ico></Cell>
        <Cell w={N} label="注释监视" plain><Ico size={14}>{person}</Ico></Cell>
        <button className="flex w-[62px] items-center justify-between px-[3px] text-[10px] leading-none whitespace-nowrap text-[#e4e4e4]">1:1 / 100%<Down /></button>
        <Cell w={M} label="切换工作空间"><Settings size={11} strokeWidth={4} /></Cell>
        <Arrow label="工作空间选项" />
        <Cell w={W} label="注释监视器"><Ico size={13} sw={1.500}><path d="M8 1v14M1 8h14" /></Ico></Cell>
        <Cell w={M} label="单位"><span className="h-3 w-1 bg-linear-to-b from-[#d0d0d0] to-[#a0a0a0]" /></Cell>
        <button className="flex w-[55px] items-center justify-between px-[3px] text-[9px] leading-none font-bold text-white">小数<Down /></button>
        <Cell w={M} label="快捷特性"><Ico size={11} sw={1.500}><path d="M3 2h10v12H3zM6 5v7M10 5v7M3 5h10" /></Ico></Cell>
        <Cell w={W} label="锁定界面"><Ico size={14} sw={1.300}><path d="M14 6V2H1v10h6M1 4h13M8 9h6v5H8zM11 9V7h4v2" /></Ico></Cell>
        <Arrow label="锁定选项" />
        <Cell w={W} label="隔离对象"><Ico size={13}><path d="M1 2h6v5H1z" /><circle cx="12" cy="9" r="3" /><path d="m6 9-3 5h6z" /></Ico></Cell>
        <Cell w={W} label="硬件加速"><Ico size={14}><circle cx="8" cy="8" r="7" fill="#1166c8" stroke="#0b4fa0" /><path d="m5 8 2 2 5-4" stroke="#0a2f66" strokeWidth="1.800" /></Ico></Cell>
        <Cell w={W} label="系统监视"><Ico size={14}><path d="M1 2h14v12H1z" fill="#f4f4f4" stroke="none" /><path d="M2 12C5 12 5 5 8 5s3 6 6 6" stroke="#333" /><path d="m12 9 4 6H9z" fill="#e06a20" stroke="none" /></Ico></Cell>
        <Cell w={W} label="全屏显示"><Ico size={13} sw={1.300}><path d="M1 3h14v10H1zM9 8l4-3M10 5h3v3M7 8l-4 3M3 8v3h3" /></Ico></Cell>
        <Cell w={W} label="自定义"><Ico size={13} sw={1.800}><path d="M1 3h14M1 8h14M1 13h14" /></Ico></Cell>
      </div>
    </footer>
  );
}

export default function App() {
  return (
    <div className="flex h-screen min-h-[600px] flex-col overflow-hidden bg-[#1e2830] font-['Open_Sans','Noto_Sans_CJK_SC',sans-serif]">
      <div className="flex shrink-0">
        <button aria-label="应用程序菜单" className="flex w-[30px] shrink-0 items-center justify-center border border-[#2a2a2a] bg-linear-to-b from-[#9b9b9b] to-[#5f5f5f]">
          <LogoA size={21} />
          <Tiny className="text-[#222]" />
        </button>
        <div className="min-w-0 flex-1">
          <TitleBar />
          <RibbonTabs />
        </div>
      </div>
      <div className="shrink-0">
        <Ribbon />
        <FileTabs />
      </div>
      <Canvas />
      <StatusBar />
    </div>
  );
}
